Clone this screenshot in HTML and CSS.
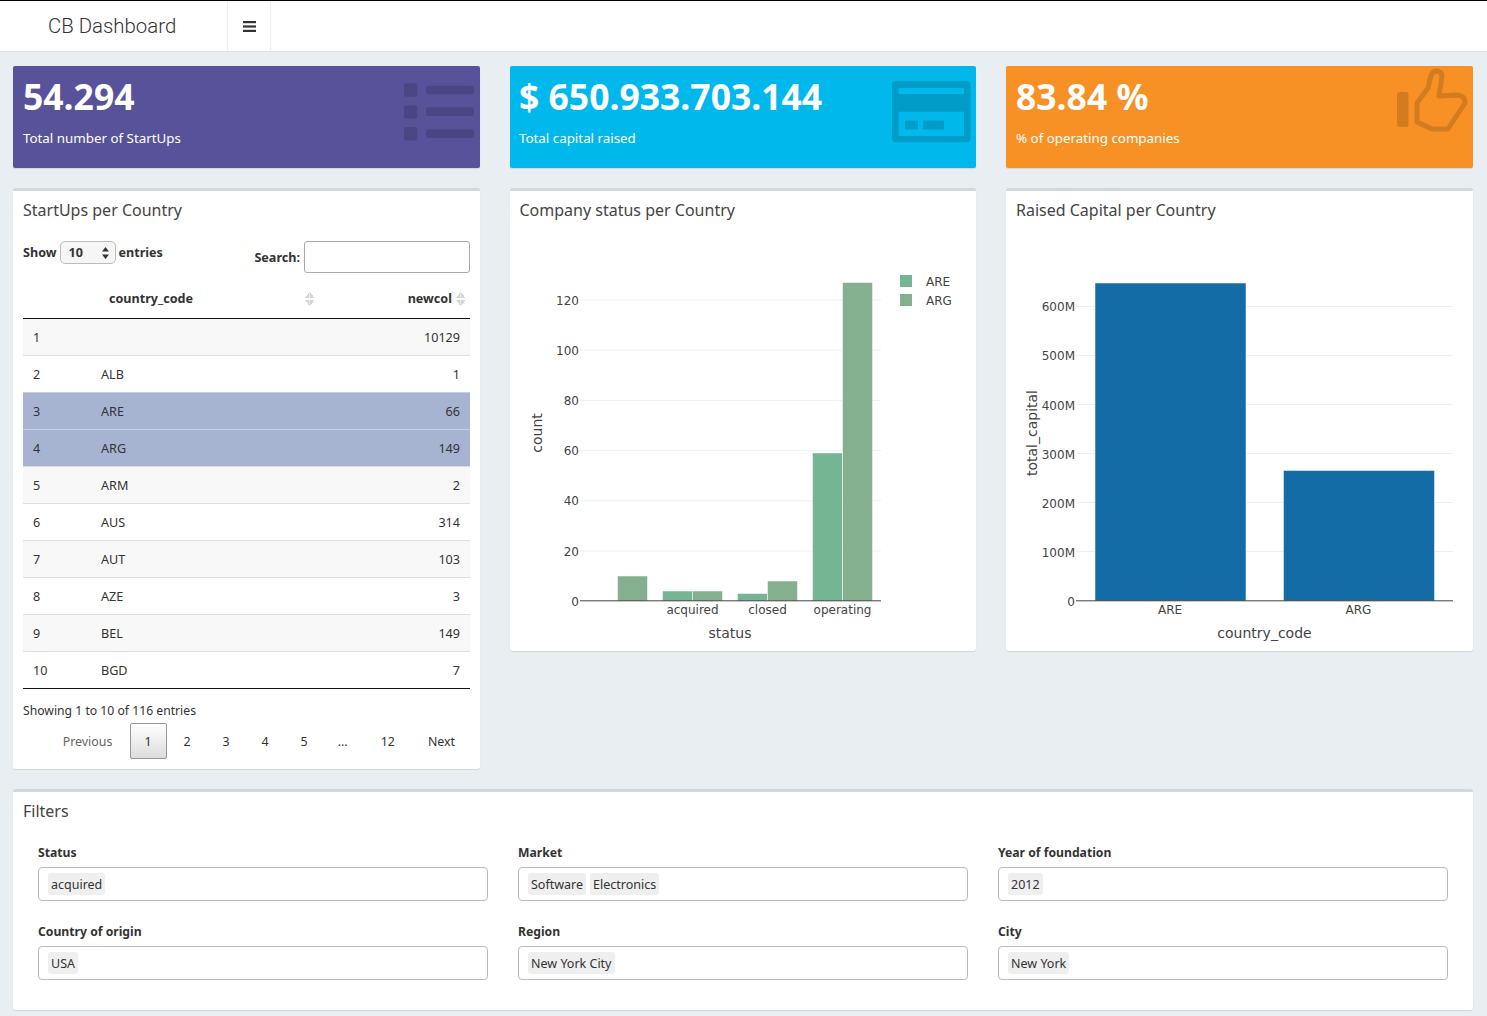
FILE: index.html
```html
<!DOCTYPE html>
<html lang="en">
<head>
<meta charset="utf-8">
<title>CB Dashboard</title>
<link rel="stylesheet" href="styles.css">
</head>
<body>
<header class="navbar">
  <div class="logo">CB Dashboard</div>
  <button class="toggle" aria-label="Toggle navigation">
    <svg class="bars" viewBox="0 0 13 11" width="13" height="11"><rect y="0" width="13" height="2.2"/><rect y="4.4" width="13" height="2.2"/><rect y="8.8" width="13" height="2.2"/></svg>
  </button>
</header>
<main class="content">
  <section class="grid">
    <div class="vbox purple">
      <div class="vvalue">54.294</div>
      <div class="vlabel">Total number of StartUps</div>
      <svg class="vicon" viewBox="0 0 100 100"><g class="iconfill">
        <rect x="24" y="23.3" width="13.4" height="13.4" rx="2"/><rect x="24" y="45.3" width="13.4" height="13.4" rx="2"/><rect x="24" y="67" width="13.4" height="13.4" rx="2"/>
        <rect x="46" y="25.7" width="48" height="8.6" rx="2.5"/><rect x="46" y="47.3" width="48" height="8.6" rx="2.5"/><rect x="46" y="69.3" width="48" height="8.6" rx="2.5"/></g></svg>
    </div>
    <div class="vbox cyan">
      <div class="vvalue">$ 650.933.703.144</div>
      <div class="vlabel">Total capital raised</div>
      <svg class="vicon" viewBox="0 0 100 100"><path class="iconfill" fill-rule="evenodd" d="M16 21H86.700a4 4 0 0 1 4 4V78.300a4 4 0 0 1-4 4H16a4 4 0 0 1-4-4V25a4 4 0 0 1 4-4zM18.700 28V34H84V28zM18.700 51.700V76H84V51.700zM25 60.500H38V69.500H25zM43 60.500H64V69.500H43z"/></svg>
    </div>
    <div class="vbox orange">
      <div class="vvalue">83.84 %</div>
      <div class="vlabel">% of operating companies</div>
      <svg class="vicon" viewBox="0 0 100 100"><rect class="iconfill" x="17" y="32" width="11.500" height="35" rx="2.500"/><path class="iconline" d="M37 60V43L48 28L51 15Q53 11 57 11Q62 12 62 16L59 36L78 35Q85 36 85 43L68 69H52L37 62Z"/></svg>
    </div>
  </section>

  <section class="grid toprow">
    <div class="box">
      <h3 class="title">StartUps per Country</h3>
      <div class="tablecontrols">
        <div class="lengthctl">Show <span class="selectfake">10<svg class="updown" viewBox="0 0 7 12" width="7" height="12"><path d="M3.500 0L7 4.500H0zM3.500 12L0 7.500H7z"/></svg></span> entries</div>
        <div class="searchctl">Search: <span class="searchinput"></span></div>
      </div>
      <table class="dt">
        <thead>
          <tr><th class="c1"></th><th class="c2">country_code<i class="sort s2"></i></th><th class="c3">newcol<i class="sort s3"></i></th></tr>
        </thead>
        <tbody>
          <tr class="odd"><td>1</td><td></td><td class="num">10129</td></tr>
          <tr><td>2</td><td>ALB</td><td class="num">1</td></tr>
          <tr class="sel"><td>3</td><td>ARE</td><td class="num">66</td></tr>
          <tr class="sel"><td>4</td><td>ARG</td><td class="num">149</td></tr>
          <tr class="odd"><td>5</td><td>ARM</td><td class="num">2</td></tr>
          <tr><td>6</td><td>AUS</td><td class="num">314</td></tr>
          <tr class="odd"><td>7</td><td>AUT</td><td class="num">103</td></tr>
          <tr><td>8</td><td>AZE</td><td class="num">3</td></tr>
          <tr class="odd"><td>9</td><td>BEL</td><td class="num">149</td></tr>
          <tr><td>10</td><td>BGD</td><td class="num">7</td></tr>
        </tbody>
      </table>
      <div class="tableinfo">Showing 1 to 10 of 116 entries</div>
      <nav class="pager">
        <span class="pg pg-prev">Previous</span><span class="pg current">1</span><span class="pg">2</span><span class="pg">3</span><span class="pg">4</span><span class="pg">5</span><span class="pg pg-dots">…</span><span class="pg pg-last">12</span><span class="pg pg-next">Next</span>
      </nav>
    </div>

    <div class="box chartbox midbox">
      <h3 class="title">Company status per Country</h3>
      <svg class="chart" viewBox="510 232 466 417" width="466" height="417">
        <g class="grid-lines">
          <line x1="580" x2="881" y1="300" y2="300"/><line x1="580" x2="881" y1="350.200" y2="350.200"/><line x1="580" x2="881" y1="400.400" y2="400.400"/><line x1="580" x2="881" y1="450.600" y2="450.600"/><line x1="580" x2="881" y1="500.800" y2="500.800"/><line x1="580" x2="881" y1="551" y2="551"/>
        </g>
        <g class="bars-are">
          <rect x="662.500" y="591" width="30" height="10"/><rect x="737.500" y="593.500" width="30" height="7.500"/><rect x="812.500" y="453" width="30" height="148"/>
        </g>
        <g class="bars-arg">
          <rect x="617.500" y="576" width="30" height="25"/><rect x="692.500" y="591" width="30" height="10"/><rect x="767.500" y="581" width="30" height="20"/><rect x="842.500" y="282.500" width="30" height="318.500"/>
        </g>
        <line class="axis" x1="580" x2="881" y1="600.800" y2="600.800"/>
        <g class="ticks end">
          <text x="579" y="305">120</text><text x="579" y="355">100</text><text x="579" y="405">80</text><text x="579" y="455">60</text><text x="579" y="505">40</text><text x="579" y="556">20</text><text x="579" y="606">0</text>
        </g>
        <g class="ticks middle">
          <text x="692.500" y="614">acquired</text><text x="767.500" y="614">closed</text><text x="842.500" y="614">operating</text>
        </g>
        <text class="axtitle middle" x="730" y="638">status</text>
        <text class="axtitle middle" transform="translate(542 433) rotate(-90)">count</text>
        <rect class="swatch-are" x="900" y="275" width="12" height="12"/><rect class="swatch-arg" x="900" y="294" width="12" height="12"/>
        <g class="ticks"><text x="926" y="286">ARE</text><text x="926" y="305">ARG</text></g>
      </svg>
    </div>

    <div class="box chartbox">
      <h3 class="title">Raised Capital per Country</h3>
      <svg class="chart" viewBox="1006 232 467 417" width="467" height="417">
        <g class="grid-lines">
          <line x1="1076" x2="1453" y1="306.500" y2="306.500"/><line x1="1076" x2="1453" y1="355.500" y2="355.500"/><line x1="1076" x2="1453" y1="404.500" y2="404.500"/><line x1="1076" x2="1453" y1="453.500" y2="453.500"/><line x1="1076" x2="1453" y1="502.500" y2="502.500"/><line x1="1076" x2="1453" y1="551.500" y2="551.500"/>
        </g>
        <g class="bars-blue">
          <rect x="1095" y="283" width="151" height="318"/><rect x="1283.500" y="470.500" width="151" height="130.500"/>
        </g>
        <line class="axis" x1="1076" x2="1453" y1="600.800" y2="600.800"/>
        <g class="ticks end">
          <text x="1075" y="311">600M</text><text x="1075" y="360">500M</text><text x="1075" y="410">400M</text><text x="1075" y="459">300M</text><text x="1075" y="508">200M</text><text x="1075" y="557">100M</text><text x="1075" y="606">0</text>
        </g>
        <g class="ticks middle"><text x="1170" y="614">ARE</text><text x="1358.500" y="614">ARG</text></g>
        <text class="axtitle middle" x="1264.500" y="638">country_code</text>
        <text class="axtitle middle" transform="translate(1037 433) rotate(-90)">total_capital</text>
      </svg>
    </div>
  </section>

  <section class="box filters">
    <h3 class="title">Filters</h3>
    <div class="filtergrid">
      <div class="field"><label class="flabel">Status</label><div class="finput"><span class="chip">acquired</span></div></div>
      <div class="field"><label class="flabel">Market</label><div class="finput"><span class="chip">Software</span><span class="chip">Electronics</span></div></div>
      <div class="field"><label class="flabel">Year of foundation</label><div class="finput"><span class="chip">2012</span></div></div>
      <div class="field"><label class="flabel">Country of origin</label><div class="finput"><span class="chip">USA</span></div></div>
      <div class="field"><label class="flabel">Region</label><div class="finput"><span class="chip">New York City</span></div></div>
      <div class="field"><label class="flabel">City</label><div class="finput"><span class="chip">New York</span></div></div>
    </div>
  </section>
</main>
</body>
</html>
```
FILE: styles.css
```css
* { box-sizing: border-box; }
html, body { margin: 0; padding: 0; }
body {
  background: #e9eef2;
  color: #333;
  font-family: "Noto Sans", "Open Sans", sans-serif;
  font-size: 12.6px;
  width: 1487px;
  height: 1016px;
  overflow: hidden;
}

.navbar {
  height: 52px;
  display: flex;
  background: #fff;
  border-top: 1px solid #000;
  border-bottom: 1px solid #dde2e7;
}
.logo {
  width: 228px;
  padding-left: 48px;
  border-right: 1px solid #eceff2;
  font-family: Roboto, "Liberation Sans", Arial, sans-serif;
  font-weight: 300;
  font-size: 20.400px;
  line-height: 50px;
  color: #333;
}
.toggle {
  width: 43px;
  padding: 0;
  border: 0;
  border-right: 1px solid #eceff2;
  background: #fff;
  display: flex;
  align-items: center;
  justify-content: center;
}
.bars { fill: #333; display: block; }

.content { padding: 14px 14px 0 13px; }
.grid {
  display: grid;
  grid-template-columns: 467px 466px 467px;
  column-gap: 30px;
  align-items: start;
}
.toprow { margin-top: 20px; }

.vbox {
  position: relative;
  height: 102px;
  border-radius: 2px;
  color: #fff;
  padding: 8px 10px 0;
  box-shadow: 0 1px 1px rgba(0,0,0,.1);
  overflow: hidden;
}
.purple { background: #58529a; }
.cyan { background: #00b8ec; padding-left: 9px; }
.orange { background: #f79125; }
.vvalue {
  font-size: 35.500px;
  font-weight: 700;
  line-height: 44px;
}
.vlabel {
  margin-top: 10px;
  font-size: 13.350px;
  line-height: 20px;
}
.vicon {
  position: absolute;
  top: -6px;
  width: 100px;
  height: 100px;
}
.purple .vicon { right: 0; }
.cyan .vicon { right: -4px; }
.orange .vicon { right: -7px; }
.iconfill { fill: rgba(0,0,0,.15); }
.iconline {
  fill: none;
  stroke: rgba(0,0,0,.15);
  stroke-width: 5;
  stroke-linejoin: round;
}

.box {
  background: #fff;
  border-top: 3px solid #d2d6de;
  border-radius: 3px;
  box-shadow: 0 1px 1px rgba(0,0,0,.1);
  padding: 0 10px;
}
.title {
  margin: 0;
  padding-top: 9px;
  font-size: 16px;
  font-weight: 400;
  line-height: 20px;
  color: #444;
}

.tablecontrols {
  display: flex;
  justify-content: space-between;
  margin-top: 21px;
  height: 32px;
  font-weight: 700;
  font-size: 12.600px;
  color: #333;
}
.lengthctl { display: flex; align-items: center; height: 23px; gap: 3px; }
.selectfake {
  position: relative;
  width: 56px;
  height: 23px;
  padding-left: 8px;
  line-height: 21px;
  border: 1px solid #bbb;
  border-radius: 5px;
  background: #f6f6f6;
}
.updown { position: absolute; right: 6px; top: 5px; fill: #333; }
.searchctl { display: flex; align-items: center; gap: 4px; }
.searchinput {
  display: block;
  width: 166px;
  height: 32px;
  border: 1px solid #aaa;
  border-radius: 3px;
  background: #fff;
}

.dt {
  width: 447px;
  table-layout: fixed;
  border-collapse: collapse;
  margin-top: 12px;
}
.dt th {
  position: relative;
  height: 33px;
  padding: 0 10px 6px;
  font-size: 12.600px;
  font-weight: 700;
  text-align: left;
  border-bottom: 1px solid #111;
}
.c1 { width: 68px; }
.dt th.c2 { width: 233px; padding-left: 18px; }
.dt th.c3 { text-align: right; padding-right: 18px; }
.sort {
  position: absolute;
  top: 7px;
  width: 9px;
  height: 14px;
  background:
    linear-gradient(to bottom right, transparent 50%, #d5d5d5 50%) 0 0/4.500px 6px no-repeat,
    linear-gradient(to bottom left, transparent 50%, #d5d5d5 50%) 4.500px 0/4.500px 6px no-repeat,
    linear-gradient(to top right, transparent 50%, #d5d5d5 50%) 0 8px/4.500px 6px no-repeat,
    linear-gradient(to top left, transparent 50%, #d5d5d5 50%) 4.500px 8px/4.500px 6px no-repeat;
}
.s2 { right: 10px; }
.s3 { right: 5px; }
.dt td {
  height: 37px;
  padding: 1px 10px 0;
  font-size: 12.600px;
  border-top: 1px solid #ddd;
  color: #333;
}
.dt tbody tr:first-child td { border-top: 0; }
.dt tbody tr:last-child td { border-bottom: 1px solid #111; }
.dt .num { text-align: right; }
.dt .odd td { background: #f8f8f8; }
.dt .sel td { background: #a6b4d2; border-top-color: #c7d0e2; }

.tableinfo {
  margin-top: 13px;
  font-size: 12.200px;
  line-height: 18px;
  color: #333;
}
.pager {
  display: flex;
  justify-content: flex-end;
  gap: 2px;
  height: 36px;
  margin-top: 3px;
  margin-bottom: 10px;
}
.pg {
  flex: none;
  width: 37px;
  height: 36px;
  padding-top: 1px;
  border: 1px solid transparent;
  border-radius: 2px;
  text-align: center;
  line-height: 34px;
  font-size: 12.400px;
  color: #333;
}
.pg-prev { width: 80px; color: #666; }
.pg-dots { width: 38px; letter-spacing: 1.500px; }
.pg-last { width: 46.500px; }
.pg-next { width: 57px; }
.current {
  border-color: #979797;
  background: linear-gradient(to bottom, #fff 0%, #dcdcdc 100%);
}

.chartbox { padding: 0; height: 463px; }
.chartbox .title { padding-left: 10px; }
.midbox .title { padding-left: 9.5px; }
.chart { display: block; margin-top: 12px; }
.grid-lines line { stroke: #eceff1; stroke-width: 1; }
.axis { stroke: #444; stroke-width: 1; }
.bars-are rect { fill: #76b594; stroke: rgba(255,255,255,.5); stroke-width: 1; }
.bars-arg rect { fill: #84b090; stroke: rgba(255,255,255,.5); stroke-width: 1; }
.bars-blue rect { fill: #146ca6; stroke: rgba(255,255,255,.5); stroke-width: 1; }
.swatch-are { fill: #76b594; }
.swatch-arg { fill: #84b090; }
.chart text { font-family: "DejaVu Sans", sans-serif; fill: #444; }
.ticks text { font-size: 12px; }
.axtitle { font-size: 14px; }
.end { text-anchor: end; }
.middle { text-anchor: middle; }

.filters {
  margin-top: 20px;
  width: 1460px;
  height: 221px;
}
.filtergrid {
  display: grid;
  grid-template-columns: repeat(3, 450px);
  column-gap: 30px;
  row-gap: 22px;
  margin: 23px 0 0 15px;
}
.flabel {
  display: block;
  font-size: 12.200px;
  font-weight: 700;
  line-height: 18px;
  margin-bottom: 5px;
  color: #333;
}
.finput {
  display: flex;
  align-items: center;
  gap: 4px;
  height: 34px;
  padding-left: 9px;
  border: 1px solid #bbb;
  border-radius: 4px;
  background: #fff;
}
.chip {
  height: 22px;
  padding: 0 3px;
  border-radius: 3px;
  background: #efefef;
  font-size: 12.500px;
  line-height: 24px;
  color: #333;
}
```
